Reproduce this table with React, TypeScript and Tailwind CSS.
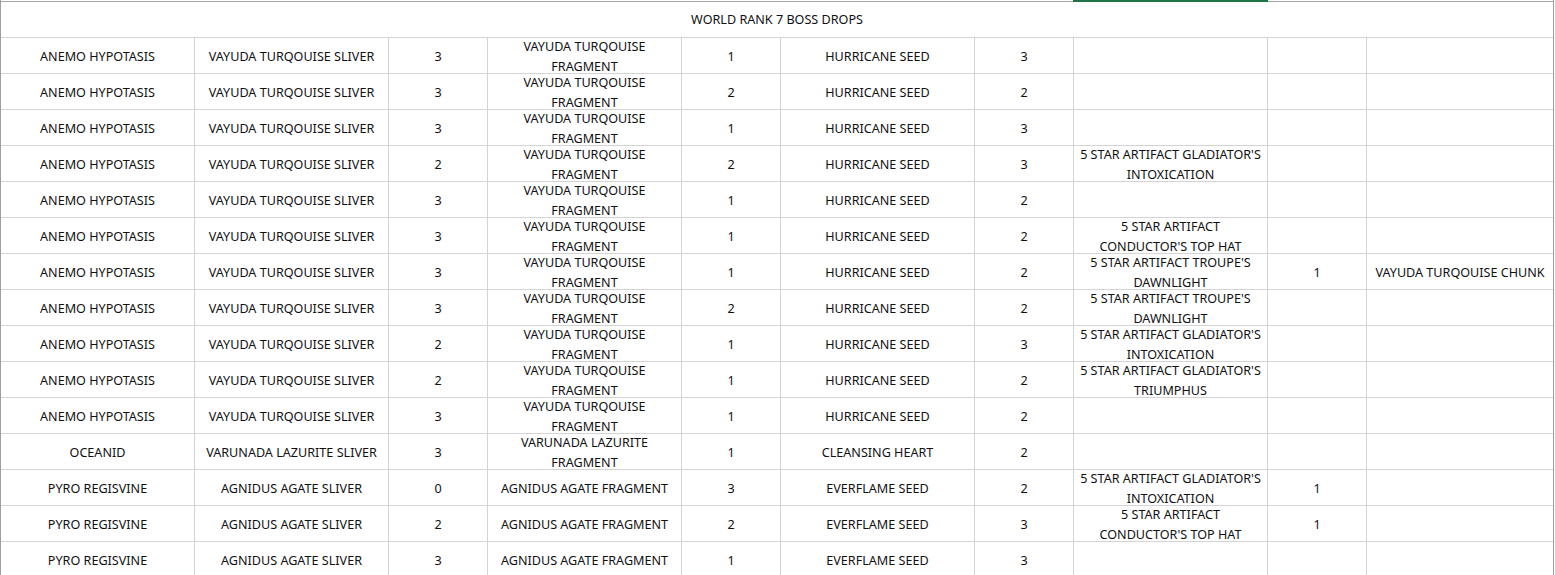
const cols = "grid-cols-[194px_194px_99px_194px_99px_194px_99px_194px_99px_186px]";

type Row = string[];

const anemo = (a: string, b: string, c: string, art = ""): Row => [
  "ANEMO HYPOTASIS",
  "VAYUDA TURQOUISE SLIVER",
  a,
  "VAYUDA TURQOUISE\nFRAGMENT",
  b,
  "HURRICANE SEED",
  c,
  art,
  "",
  "",
];

const rows: Row[] = [
  anemo("3", "1", "3"),
  anemo("3", "2", "2"),
  anemo("3", "1", "3"),
  anemo("2", "2", "3", "5 STAR ARTIFACT GLADIATOR'S\nINTOXICATION"),
  anemo("3", "1", "2"),
  anemo("3", "1", "2", "5 STAR ARTIFACT\nCONDUCTOR'S TOP HAT"),
  [
    "ANEMO HYPOTASIS",
    "VAYUDA TURQOUISE SLIVER",
    "3",
    "VAYUDA TURQOUISE\nFRAGMENT",
    "1",
    "HURRICANE SEED",
    "2",
    "5 STAR ARTIFACT TROUPE'S\nDAWNLIGHT",
    "1",
    "VAYUDA TURQOUISE CHUNK",
  ],
  anemo("3", "2", "2", "5 STAR ARTIFACT TROUPE'S\nDAWNLIGHT"),
  anemo("2", "1", "3", "5 STAR ARTIFACT GLADIATOR'S\nINTOXICATION"),
  anemo("2", "1", "2", "5 STAR ARTIFACT GLADIATOR'S\nTRIUMPHUS"),
  anemo("3", "1", "2"),
  ["OCEANID", "VARUNADA LAZURITE SLIVER", "3", "VARUNADA LAZURITE\nFRAGMENT", "1", "CLEANSING HEART", "2", "", "", ""],
  ["PYRO REGISVINE", "AGNIDUS AGATE SLIVER", "0", "AGNIDUS AGATE FRAGMENT", "3", "EVERFLAME SEED", "2", "5 STAR ARTIFACT GLADIATOR'S\nINTOXICATION", "1", ""],
  ["PYRO REGISVINE", "AGNIDUS AGATE SLIVER", "2", "AGNIDUS AGATE FRAGMENT", "2", "EVERFLAME SEED", "3", "5 STAR ARTIFACT\nCONDUCTOR'S TOP HAT", "1", ""],
  ["PYRO REGISVINE", "AGNIDUS AGATE SLIVER", "3", "AGNIDUS AGATE FRAGMENT", "1", "EVERFLAME SEED", "3", "", "", ""],
];

function Cell({ text, last }: { text: string; last: boolean }) {
  const lines = text.split("\n");
  return (
    <div
      className={`h-[36px] pt-[2px] flex flex-col items-center justify-center border-b border-[#d4d4d4] whitespace-nowrap leading-[20px] overflow-visible ${
        last ? "" : "border-r"
      }`}
    >
      {lines.map((l, i) => (
        <span key={i}>{l}</span>
      ))}
    </div>
  );
}

export default function App() {
  return (
    <div className="w-[1555px] h-[575px] overflow-hidden bg-white text-[#111] text-[12.6px] font-['Noto_Sans',sans-serif]">
      <div className="w-[1554px] border-l border-r border-[#9e9e9e]">
        {/* top edge with selected cell marker */}
        <div className="flex h-[2px]">
          <div className="w-[1072px] border-b border-[#a6a6a6]" />
          <div className="w-[195px] bg-[#217346]" />
          <div className="flex-1 border-b border-[#a6a6a6]" />
        </div>
        <div className="h-[36px] pt-[2px] flex items-center justify-center border-b border-[#d4d4d4]">
          WORLD RANK 7 BOSS DROPS
        </div>
        {rows.map((r, i) => (
          <div key={i} className={`grid ${cols}`}>
            {r.map((t, j) => (
              <Cell key={j} text={t} last={j === r.length - 1} />
            ))}
          </div>
        ))}
      </div>
    </div>
  );
}
